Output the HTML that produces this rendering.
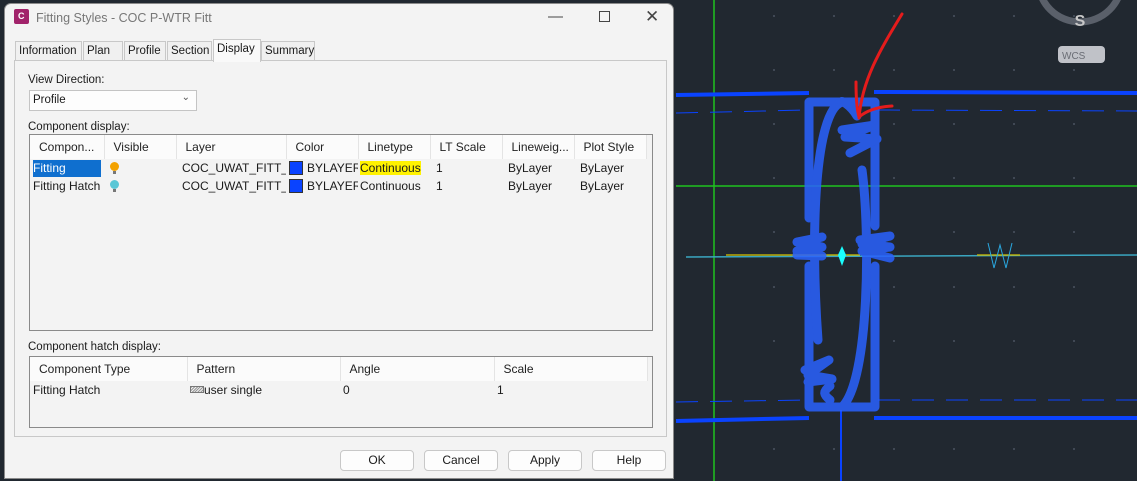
<!DOCTYPE html>
<html><head><style>
*{margin:0;padding:0;box-sizing:border-box}
body{width:1137px;height:481px;background:#212830;position:relative;overflow:hidden;font-family:"Liberation Sans",sans-serif;font-size:12px;color:#1a1a1a}
.dlg{position:absolute;left:4px;top:3px;width:670px;height:476px;background:#f3f3f3;border:1px solid #8a8a8a;border-radius:7px 7px 0 0}
.abs{position:absolute}
.tab{position:absolute;top:37px;height:20px;border:1px solid #c8c8c8;border-bottom:none;background:#f0f0f0;padding:3px 0 0 3px;font-size:11.5px}
.panel{position:absolute;left:9px;top:56px;width:653px;height:377px;border:1px solid #c8c8c8;background:#f3f3f3}
table{border-collapse:collapse;position:absolute;font-size:12px;table-layout:fixed}
td{height:18px;padding:0 0 0 6px;white-space:nowrap;overflow:hidden}
.hd td{height:24px;background:#fbfbfb;border-right:1px solid #e4e4e4;padding-left:9px;color:#222}
.btn{position:absolute;top:446px;width:74px;height:21px;border:1px solid #c8c8c8;border-radius:4px;background:#fdfdfd;text-align:center;line-height:19px}
.sw{display:inline-block;width:14px;height:14px;background:#0a43ff;border:1px solid #333;vertical-align:-3px;margin-right:4px}
.bulb{display:inline-block;width:9px;height:9px;border-radius:50%;position:relative;vertical-align:1px}
.bulb:after{content:"";position:absolute;left:3px;top:9px;width:3px;height:3px;background:#777}
</style></head><body>
<svg class="abs" style="left:0;top:0" width="1137" height="481">
<g fill="#4a5360">
<circle cx="774" cy="16" r="1"/><circle cx="834" cy="16" r="1"/><circle cx="894" cy="16" r="1"/><circle cx="954" cy="16" r="1"/><circle cx="1014" cy="16" r="1"/><circle cx="1074" cy="16" r="1"/>
<circle cx="774" cy="70" r="1"/><circle cx="834" cy="70" r="1"/><circle cx="894" cy="70" r="1"/><circle cx="954" cy="70" r="1"/><circle cx="1014" cy="70" r="1"/><circle cx="1074" cy="70" r="1"/>
<circle cx="774" cy="124" r="1"/><circle cx="894" cy="124" r="1"/><circle cx="954" cy="124" r="1"/><circle cx="1014" cy="124" r="1"/><circle cx="1074" cy="124" r="1"/>
<circle cx="774" cy="178" r="1"/><circle cx="894" cy="178" r="1"/><circle cx="954" cy="178" r="1"/><circle cx="1014" cy="178" r="1"/><circle cx="1074" cy="178" r="1"/>
<circle cx="774" cy="232" r="1"/><circle cx="954" cy="232" r="1"/><circle cx="1014" cy="232" r="1"/><circle cx="1074" cy="232" r="1"/>
<circle cx="774" cy="287" r="1"/><circle cx="894" cy="287" r="1"/><circle cx="954" cy="287" r="1"/><circle cx="1014" cy="287" r="1"/><circle cx="1074" cy="287" r="1"/>
<circle cx="774" cy="341" r="1"/><circle cx="894" cy="341" r="1"/><circle cx="954" cy="341" r="1"/><circle cx="1014" cy="341" r="1"/><circle cx="1074" cy="341" r="1"/>
<circle cx="774" cy="449" r="1"/><circle cx="834" cy="449" r="1"/><circle cx="894" cy="449" r="1"/><circle cx="954" cy="449" r="1"/><circle cx="1014" cy="449" r="1"/><circle cx="1074" cy="449" r="1"/>
</g>
<circle cx="1080" cy="-20" r="42" fill="none" stroke="#5a606a" stroke-width="7"/>
<text x="1080" y="26" fill="#c8c8c8" font-size="16" font-weight="bold" text-anchor="middle" font-family="Liberation Sans">S</text>
<rect x="1058" y="46" width="47" height="17" rx="4" fill="#c0c2c8"/>
<text x="1062" y="59" fill="#6a6d75" font-size="10" font-family="Liberation Sans">WCS</text>
<line x1="714" y1="0" x2="714" y2="481" stroke="#1fc21f" stroke-width="1.5"/>
<line x1="676" y1="186" x2="1137" y2="186" stroke="#1fc21f" stroke-width="1.5"/>
<line x1="676" y1="95" x2="809" y2="93" stroke="#0a43ff" stroke-width="4"/>
<line x1="874" y1="92" x2="1137" y2="93" stroke="#0a43ff" stroke-width="4"/>
<line x1="676" y1="421" x2="809" y2="418" stroke="#0a43ff" stroke-width="4"/>
<line x1="874" y1="418" x2="1137" y2="418" stroke="#0a43ff" stroke-width="4"/>
<line x1="676" y1="113" x2="808" y2="110" stroke="#0a43ff" stroke-width="1" stroke-dasharray="22,12"/>
<line x1="878" y1="110" x2="1137" y2="111" stroke="#0a43ff" stroke-width="1" stroke-dasharray="22,12"/>
<line x1="676" y1="402" x2="808" y2="400" stroke="#0a43ff" stroke-width="1" stroke-dasharray="22,12"/>
<line x1="878" y1="400" x2="1137" y2="400" stroke="#0a43ff" stroke-width="1" stroke-dasharray="22,12"/>
<line x1="841" y1="410" x2="841" y2="481" stroke="#0a43ff" stroke-width="2"/>
<line x1="686" y1="257" x2="1137" y2="255" stroke="#3aa6c0" stroke-width="1.5"/>
<line x1="726" y1="255" x2="860" y2="255" stroke="#d8c400" stroke-width="1.3"/>
<line x1="977" y1="255" x2="1020" y2="255" stroke="#d8c400" stroke-width="1.3"/>
<path d="M988 243 L994 268 L1000 245 L1006 268 L1012 243" fill="none" stroke="#2aa8e0" stroke-width="1"/>
<g fill="none" stroke="#2a62ff" stroke-width="9" stroke-linecap="round" stroke-linejoin="round" opacity="0.85">
<path d="M809 218 V102 H875 V226"/><path d="M809 266 V407 H875 V266"/>
<path d="M842 102 C815 110 810 230 818 340"/><path d="M862 170 C870 230 870 380 842 407"/>
<path d="M857 116 C850 104 840 100 842 102"/>
<path d="M830 400 C824 395 822 392 830 386"/>
<path d="M842 130 L875 125 L845 137 L877 139 L850 153"/>
<path d="M810 240 L822 237 L797 242 L822 247 L797 251 L822 256 L797 255"/>
<path d="M860 240 L890 236 L862 244 L890 247 L862 251 L890 258"/>
<path d="M805 370 L829 360 L808 375 L832 379 L808 382"/>
</g>
<path d="M842 246 L846 255 L842 266 L838 255 Z" fill="#19ffff"/>
<path d="M902 14 C880 50 862 80 859 118 M856 82 C856 100 857 110 859 117 C865 112 875 107 892 106" fill="none" stroke="#e51c1c" stroke-width="3" stroke-linecap="round"/>
</svg>
<div class="dlg">
 <svg class="abs" style="left:9px;top:5px" width="15" height="15"><rect width="15" height="15" rx="2" fill="#a1226a"/><text x="4" y="10" font-size="9" font-weight="bold" fill="#fff" font-family="Liberation Sans">C</text></svg>
 <div class="abs" style="left:31px;top:7px;font-size:12.5px;color:#777">Fitting Styles - COC P-WTR Fitt</div>
 <div class="abs" style="left:543px;top:4px;font-size:15px;color:#444">&#8212;</div>
 <div class="abs" style="left:594px;top:7px;width:11px;height:11px;border:1px solid #444"></div>
 <div class="abs" style="left:640px;top:3px;font-size:17px;color:#444">&#10005;</div>
 <div class="tab" style="left:10px;width:67px">Information</div>
 <div class="tab" style="left:78px;width:40px">Plan</div>
 <div class="tab" style="left:119px;width:42px">Profile</div>
 <div class="tab" style="left:162px;width:45px">Section</div>
 <div class="tab" style="left:208px;width:48px;top:35px;height:23px;background:#f9f9f9;z-index:2">Display</div>
 <div class="tab" style="left:256px;width:54px">Summary</div>
 <div class="panel"></div>
 <div class="abs" style="left:23px;top:70px;font-size:11.5px">View Direction:</div>
 <div class="abs" style="left:24px;top:86px;width:168px;height:21px;border:1px solid #c4c4c4;background:#fdfdfd;padding:3px 0 0 3px;font-size:11.5px">Profile<span style="position:absolute;right:6px;top:1px;font-size:10px;color:#555">&#8964;</span></div>
 <div class="abs" style="left:23px;top:117px;font-size:11.5px">Component display:</div>
 <div class="abs" style="left:24px;top:130px;width:624px;height:197px;border:1px solid #8a8a8a;background:#f3f3f3"></div>
 <table style="left:25px;top:131px;width:616px">
  <colgroup><col style="width:74px"><col style="width:72px"><col style="width:110px"><col style="width:72px"><col style="width:72px"><col style="width:72px"><col style="width:72px"><col style="width:72px"></colgroup>
  <tr class="hd"><td>Compon...</td><td>Visible</td><td>Layer</td><td>Color</td><td>Linetype</td><td>LT Scale</td><td>Lineweig...</td><td>Plot Style</td></tr>
  <tr><td style="padding:0 0 0 3px"><span style="display:block;width:68px;background:#0f6fcf;color:#fff;height:17px;line-height:17px">Fitting</span></td><td><span class="bulb" style="background:#f3a200"></span></td><td>COC_UWAT_FITT_...</td><td style="padding-left:3px"><span class="sw"></span>BYLAYER</td><td style="padding-left:2px"><span style="background:#fff200">Continuous</span></td><td>1</td><td>ByLayer</td><td>ByLayer</td></tr>
  <tr><td style="padding-left:3px">Fitting Hatch</td><td><span class="bulb" style="background:#5bc7d6"></span></td><td>COC_UWAT_FITT_...</td><td style="padding-left:3px"><span class="sw"></span>BYLAYER</td><td style="padding-left:2px">Continuous</td><td>1</td><td>ByLayer</td><td>ByLayer</td></tr>
 </table>
 <div class="abs" style="left:23px;top:337px;font-size:11.5px">Component hatch display:</div>
 <div class="abs" style="left:24px;top:352px;width:624px;height:72px;border:1px solid #8a8a8a;background:#f3f3f3"></div>
 <table style="left:25px;top:353px;width:617px">
  <colgroup><col style="width:157px"><col style="width:153px"><col style="width:154px"><col style="width:153px"></colgroup>
  <tr class="hd"><td>Component Type</td><td>Pattern</td><td>Angle</td><td>Scale</td></tr>
  <tr><td style="padding-left:3px">Fitting Hatch</td><td style="padding-left:3px"><span style="display:inline-block;width:14px;height:7px;border:1px solid #777;background:repeating-linear-gradient(135deg,#999 0 1px,#eee 1px 2px);vertical-align:1px"></span>user single</td><td style="padding-left:3px">0</td><td style="padding-left:3px">1</td></tr>
 </table>
 <div class="btn" style="left:335px">OK</div>
 <div class="btn" style="left:419px">Cancel</div>
 <div class="btn" style="left:503px">Apply</div>
 <div class="btn" style="left:587px">Help</div>
</div>
</body></html>
